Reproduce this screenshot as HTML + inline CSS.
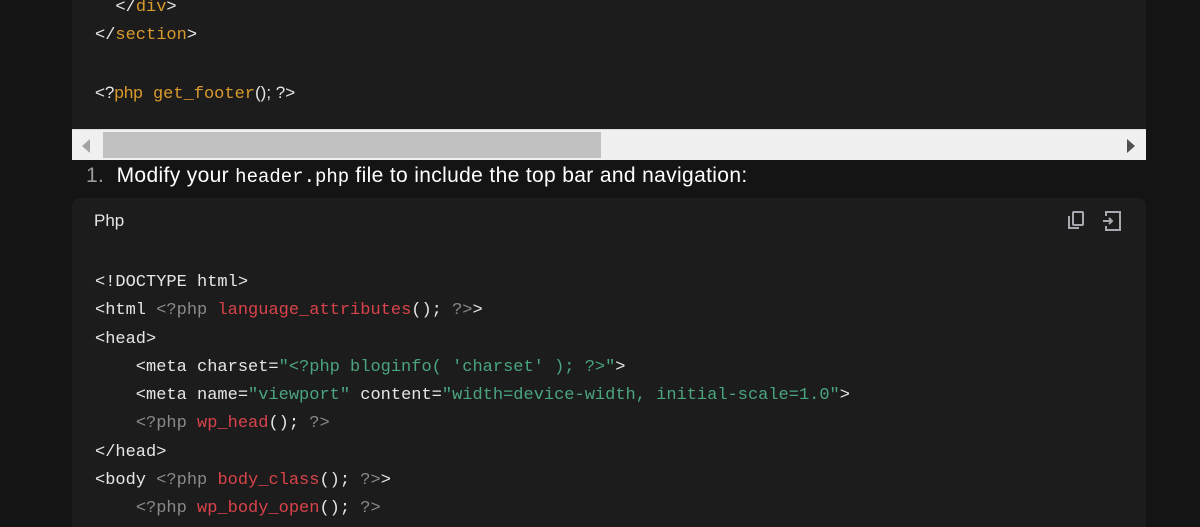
<!DOCTYPE html>
<html><head><style>
html,body{margin:0;padding:0;background:#141414;width:1200px;height:527px;overflow:hidden;position:relative}
.mono{font-family:"Liberation Mono",monospace;font-size:17px;white-space:pre;position:absolute;left:95px;line-height:28.3px}
.blk1{position:absolute;left:72px;top:0;width:1074px;height:129px;background:#1c1c1c}
.sb{position:absolute;left:72px;top:129px;width:1074px;height:31px;background:#f0f0f0;border-top:1px solid #ddd;box-sizing:border-box}
.thumb{position:absolute;left:31px;top:2px;width:498px;height:26px;background:#c1c1c1}
.blk2{position:absolute;left:72px;top:198px;width:1074px;height:340px;background:#1c1c1c;border-radius:8px}
.w{color:#e6e6e6}.g{color:#8a8a8a}.r{color:#d9434a}.gr{color:#4aa57e}.o{color:#d99a2b}
.s{font-family:"Liberation Sans",sans-serif}
</style></head><body>
<div class="blk1"></div>
<div class="mono w" style="top:-6px;left:95px"><span>  &lt;/<span class="o">div</span>&gt;</span>
&lt;/<span class="o">section</span>&gt;

<span class="s">&lt;?</span><span class="o s">php</span> <span class="o">get_footer</span><span class="s">(); ?&gt;</span></div>
<div class="sb"><div class="thumb"></div>
<svg style="position:absolute;left:10px;top:9px" width="10" height="14"><path d="M8 0L0 7L8 14Z" fill="#a3a3a3"/></svg>
<svg style="position:absolute;right:10px;top:9px" width="10" height="14"><path d="M1 0L9 7L1 14Z" fill="#505050"/></svg>
</div>
<div style="position:absolute;left:86px;top:162px;font-family:'Liberation Sans',sans-serif;font-size:21px;letter-spacing:0.35px;color:#fff;line-height:28px;white-space:nowrap"><span style="color:#9a9a9a">1.</span>&nbsp; Modify your <span style="font-family:'Liberation Mono',monospace;font-size:19px;letter-spacing:0">header.php</span> file to include the top bar and navigation:</div>
<div class="blk2"></div>
<div style="position:absolute;left:94px;top:211px;font-family:'Liberation Sans',sans-serif;font-size:17px;color:#e6e6e6">Php</div>
<svg style="position:absolute;left:1064px;top:209px" width="64" height="26" fill="none" stroke="#a8a8b0" stroke-width="2">
<rect x="9" y="3" width="10" height="13" rx="1"/><path d="M5 7v12h10"/>
<path d="M42 7V3h14v18H42v-4"/><path d="M39 12h9M45 9l3 3-3 3"/>
</svg>
<div class="mono w" style="top:269px">&lt;!DOCTYPE html&gt;
&lt;html <span class="g">&lt;?php</span> <span class="r">language_attributes</span>(); <span class="g">?&gt;</span>&gt;
&lt;head&gt;
    &lt;meta charset=<span class="gr">"&lt;?php bloginfo( 'charset' ); ?&gt;"</span>&gt;
    &lt;meta name=<span class="gr">"viewport"</span> content=<span class="gr">"width=device-width, initial-scale=1.0"</span>&gt;
    <span class="g">&lt;?php</span> <span class="r">wp_head</span>(); <span class="g">?&gt;</span>
&lt;/head&gt;
&lt;body <span class="g">&lt;?php</span> <span class="r">body_class</span>(); <span class="g">?&gt;</span>&gt;
    <span class="g">&lt;?php</span> <span class="r">wp_body_open</span>(); <span class="g">?&gt;</span></div>
</body></html>
